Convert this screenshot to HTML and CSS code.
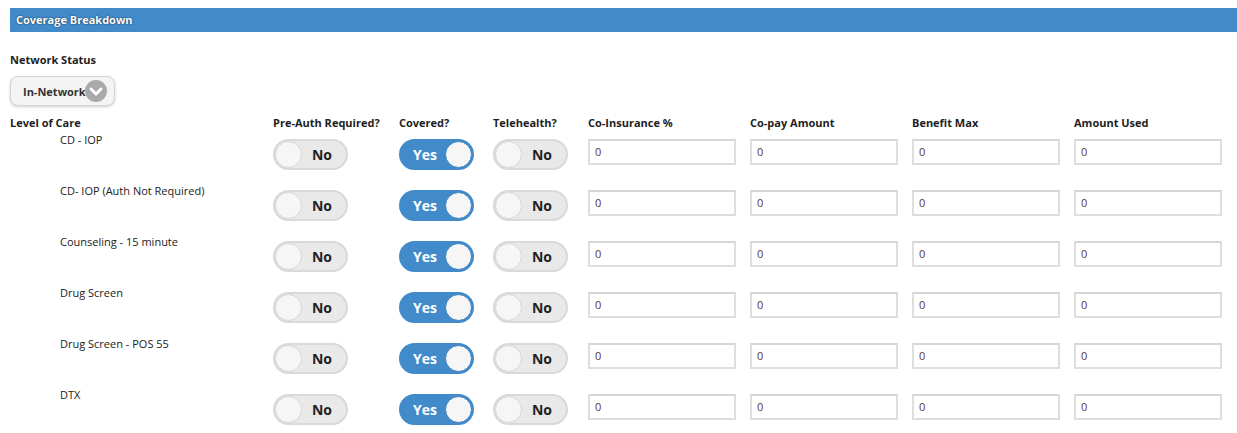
FILE: index.html
```html
<!DOCTYPE html>
<html>
<head>
<meta charset="utf-8">
<link rel="stylesheet" href="styles.css">
</head>
<body>
<div class="page">
  <div class="panel-head">Coverage Breakdown</div>
  <div class="net">
    <div class="net-label">Network Status</div>
    <div class="dropdown">
      <span class="dd-text">In-Network</span>
      <span class="dd-icon">
        <svg width="22" height="22" viewBox="0 0 22 22"><circle cx="11" cy="11" r="11" fill="#a9a9a9"/><path d="M6 9 L11 14 L16 9" fill="none" stroke="#fff" stroke-width="3" stroke-linecap="round" stroke-linejoin="round"/></svg>
      </span>
    </div>
  </div>
  <div class="grid">
    <div class="hcell">Level of Care</div>
    <div class="hcell">Pre-Auth Required?</div>
    <div class="hcell">Covered?</div>
    <div class="hcell">Telehealth?</div>
    <div class="hcell">Co-Insurance %</div>
    <div class="hcell">Co-pay Amount</div>
    <div class="hcell">Benefit Max</div>
    <div class="hcell">Amount Used</div>

    <div class="lcell">CD - IOP</div>
    <div class="tcell"><div class="tog off"><span class="knob"></span><span class="tl">No</span></div></div>
    <div class="tcell"><div class="tog on"><span class="tl">Yes</span><span class="knob"></span></div></div>
    <div class="tcell"><div class="tog off"><span class="knob"></span><span class="tl">No</span></div></div>
    <div class="icell"><div class="inp">0</div></div>
    <div class="icell"><div class="inp">0</div></div>
    <div class="icell"><div class="inp">0</div></div>
    <div class="icell"><div class="inp">0</div></div>

    <div class="lcell">CD- IOP (Auth Not Required)</div>
    <div class="tcell"><div class="tog off"><span class="knob"></span><span class="tl">No</span></div></div>
    <div class="tcell"><div class="tog on"><span class="tl">Yes</span><span class="knob"></span></div></div>
    <div class="tcell"><div class="tog off"><span class="knob"></span><span class="tl">No</span></div></div>
    <div class="icell"><div class="inp">0</div></div>
    <div class="icell"><div class="inp">0</div></div>
    <div class="icell"><div class="inp">0</div></div>
    <div class="icell"><div class="inp">0</div></div>

    <div class="lcell">Counseling - 15 minute</div>
    <div class="tcell"><div class="tog off"><span class="knob"></span><span class="tl">No</span></div></div>
    <div class="tcell"><div class="tog on"><span class="tl">Yes</span><span class="knob"></span></div></div>
    <div class="tcell"><div class="tog off"><span class="knob"></span><span class="tl">No</span></div></div>
    <div class="icell"><div class="inp">0</div></div>
    <div class="icell"><div class="inp">0</div></div>
    <div class="icell"><div class="inp">0</div></div>
    <div class="icell"><div class="inp">0</div></div>

    <div class="lcell">Drug Screen</div>
    <div class="tcell"><div class="tog off"><span class="knob"></span><span class="tl">No</span></div></div>
    <div class="tcell"><div class="tog on"><span class="tl">Yes</span><span class="knob"></span></div></div>
    <div class="tcell"><div class="tog off"><span class="knob"></span><span class="tl">No</span></div></div>
    <div class="icell"><div class="inp">0</div></div>
    <div class="icell"><div class="inp">0</div></div>
    <div class="icell"><div class="inp">0</div></div>
    <div class="icell"><div class="inp">0</div></div>

    <div class="lcell">Drug Screen - POS 55</div>
    <div class="tcell"><div class="tog off"><span class="knob"></span><span class="tl">No</span></div></div>
    <div class="tcell"><div class="tog on"><span class="tl">Yes</span><span class="knob"></span></div></div>
    <div class="tcell"><div class="tog off"><span class="knob"></span><span class="tl">No</span></div></div>
    <div class="icell"><div class="inp">0</div></div>
    <div class="icell"><div class="inp">0</div></div>
    <div class="icell"><div class="inp">0</div></div>
    <div class="icell"><div class="inp">0</div></div>

    <div class="lcell">DTX</div>
    <div class="tcell"><div class="tog off"><span class="knob"></span><span class="tl">No</span></div></div>
    <div class="tcell"><div class="tog on"><span class="tl">Yes</span><span class="knob"></span></div></div>
    <div class="tcell"><div class="tog off"><span class="knob"></span><span class="tl">No</span></div></div>
    <div class="icell"><div class="inp">0</div></div>
    <div class="icell"><div class="inp">0</div></div>
    <div class="icell"><div class="inp">0</div></div>
    <div class="icell"><div class="inp">0</div></div>
  </div>
</div>
</body>
</html>
```

FILE: styles.css
```css
* { box-sizing: border-box; }
html, body { margin: 0; padding: 0; background: #fff; }
body {
  font-family: "Open Sans", "Noto Sans", sans-serif;
  font-size: 11px;
  line-height: 15px;
  color: #222;
}
.page { padding: 8px 0 0 10px; }
.panel-head {
  height: 24px;
  background: #428bca;
  color: #fff;
  font-weight: 700;
  font-size: 11px;
  line-height: 24px;
  padding-left: 6px;
  text-shadow: 0 0 2px rgba(0,0,0,0.55), 0 0 1px rgba(0,0,0,0.4);
}
.net { padding-top: 20px; }
.net-label { font-weight: 700; color: #1e1e1e; }
.dropdown {
  margin-top: 9px;
  width: 105px;
  height: 30px;
  border: 1px solid #d4d4d4;
  border-radius: 8px;
  background: #f4f4f4;
  box-shadow: 0 1px 3px rgba(0,0,0,0.18);
  display: flex;
  align-items: center;
  padding-left: 12px;
}
.dd-text { font-weight: 700; color: #333; }
.dd-icon { display: flex; margin-left: -1px; }
.grid {
  margin-top: 9px;
  display: grid;
  grid-template-columns: 263px 126px 94px 95px 162px 162px 162px 1fr;
  grid-auto-rows: auto;
}
.hcell { font-weight: 700; color: #1e1e1e; height: 17px; }
.lcell { padding-left: 50px; height: 51px; color: #222; }
.tcell { padding-top: 7px; }
.icell { padding-top: 7px; }
.tog {
  width: 75px;
  height: 31px;
  border-radius: 16px;
  display: flex;
  align-items: center;
  border: 2px solid #d9d9d9;
  background: #e9e9e9;
}
.tog .knob {
  width: 27px;
  height: 27px;
  border-radius: 50%;
  background: #f6f6f6;
  border: 1px solid #d6d6d6;
  flex: none;
}
.tog .tl {
  flex: 1;
  text-align: center;
  font-weight: 700;
  font-size: 14px;
  color: #222;
}
.tog.off .tl { padding-right: 4px; }
.tog.on {
  background: #428bca;
  border-color: #428bca;
}
.tog.on .knob { border-color: #3b7dba; }
.tog.on .tl { color: #fff; padding-left: 4px; }
.inp {
  width: 148px;
  height: 26px;
  border: 2px solid #dedede;
  border-top-color: #d6d6d6;
  background: #fff;
  padding-left: 5px;
  line-height: 22px;
  color: #5c3434;
}
```
